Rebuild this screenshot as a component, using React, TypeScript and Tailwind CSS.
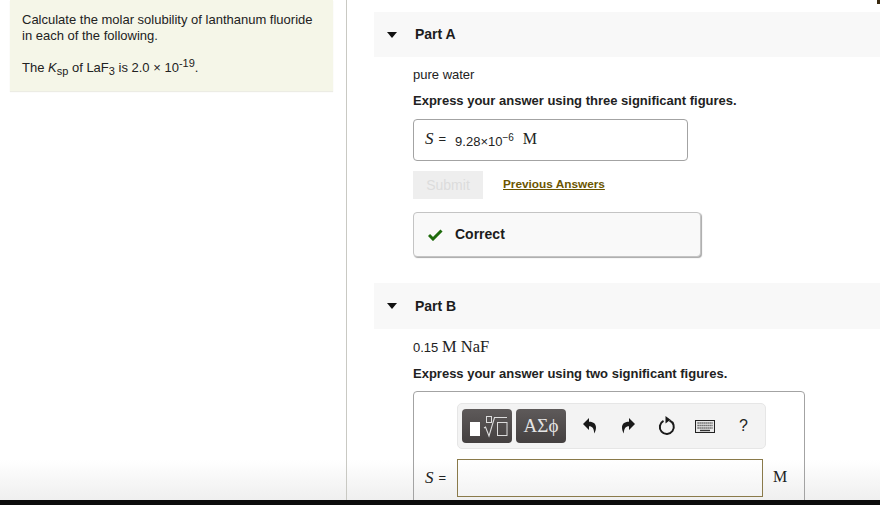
const sans = "font-['Liberation_Sans',Arial,sans-serif]";
const serif = "font-['Liberation_Serif','Times_New_Roman',serif]";

function PartHeader({ label, tall }: { label: string; tall?: boolean }) {
  return (
    <div className={`flex items-center bg-[#f8f8f8] ${tall ? "h-[46px]" : "h-[45px]"}`}>
      {/* Caret */}
      <svg width="10" height="6" viewBox="0 0 10 6" className="ml-[13px]">
        <path d="M0 0h10L5 6z" fill="#111" />
      </svg>
      <span className="ml-[18px] text-[14px] font-bold text-[#1c1c1c]">{label}</span>
    </div>
  );
}

function SquareRootIcon() {
  return (
    <svg width="50" height="34" viewBox="0 0 50 34" fill="none">
      <rect x="8" y="13" width="10" height="14" fill="#fff" />
      <rect x="24.5" y="7.5" width="5" height="6" stroke="#ddd" strokeWidth="1" />
      <path d="M22 19l1.500-1 3.500 9 5.500-18.500H45" stroke="#ddd" strokeWidth="1.100" />
      <rect x="35.500" y="13.500" width="9.500" height="13" stroke="#ddd" strokeWidth="1" />
    </svg>
  );
}

function UndoIcon({ flip }: { flip?: boolean }) {
  return (
    <svg width="14" height="16" viewBox="0 0 14 16" className={flip ? "-scale-x-100" : ""}>
      <path d="M6 0L0 6l6 6V8.200c3.500 0 5 2 5.200 7.300C14.500 9.500 13.500 3.800 6 3.800z" fill="#1a1a1a" />
    </svg>
  );
}

function ResetIcon() {
  return (
    <svg width="18" height="20" viewBox="0 0 18 20" fill="none">
      <path d="M5.500 4.800a7 7 0 1 0 6-.3" stroke="#1a1a1a" strokeWidth="2" />
      <path d="M7.500 0v7.500l5-3.800z" fill="#1a1a1a" />
    </svg>
  );
}

function KeyboardIcon() {
  return (
    <svg width="20" height="13" viewBox="0 0 20 13">
      <rect x="0.500" y="0.500" width="19" height="12" fill="#e8e8e8" stroke="#222" />
      <path d="M2.500 3h15M2.500 5.500h15M2.500 8h15" stroke="#444" strokeWidth="1.400" strokeDasharray="1.200 0.800" />
      <path d="M5 10.500h10" stroke="#333" strokeWidth="1.400" />
    </svg>
  );
}

export default function App() {
  return (
    <div className={`flex h-[505px] w-[880px] flex-col overflow-hidden bg-white text-[#222] ${sans}`}>
      <div className="relative flex h-[500px] overflow-hidden bg-gradient-to-b from-white from-[92%] to-[#efefef]">
        {/* Corner mark at the top right */}
        <div className="absolute right-0 top-0 h-[4px] w-[3px] bg-[#3a2a10]" />

        {/* Left column with the problem statement */}
        <aside className="w-[347px] shrink-0 border-r border-[#c9c9c3] pl-[10px] pr-[13px]">
          <div className="h-[91px] bg-[#f5f6e8] pl-[12px] pt-[12px] text-[13px] leading-[16px] text-[#222] shadow-[0_1px_1px_#ecece4]">
            <p>
              Calculate the molar solubility of lanthanum fluoride
              <br />
              in each of the following.
            </p>
            <p className="mt-[16px]">
              The <i>K</i>
              <sub className="text-[11px]">sp</sub> of LaF<sub className="text-[11px]">3</sub> is 2.0 × 10
              <sup className="text-[11px]">-19</sup>.
            </p>
          </div>
        </aside>

        {/* Right column with the parts */}
        <main className="min-w-0 flex-1 pl-[27px] pt-[12px]">
          <PartHeader label="Part A" />
          <div className="pl-[39px]">
            <p className="mt-[10px] text-[13px] leading-[16px]">pure water</p>
            <p className="mt-[10px] text-[13px] font-bold leading-[16px]">
              Express your answer using three significant figures.
            </p>
            <div className="mt-[10px] flex h-[42px] w-[275px] items-center rounded-[4px] border border-[#a3a3a3] pl-[11px]">
              <i className={`${serif} -mt-[2px] text-[17px]`}>S</i>
              <span className="ml-[5px] -mt-[2px] text-[13px]">=</span>
              <span className="ml-[9px] mt-[3px] text-[13px]">
                9.28×10<sup className="text-[10px]">−6</sup>
              </span>
              <span className={`${serif} ml-[9px] -mt-[3px] text-[16px]`}>M</span>
            </div>
            <div className="mt-[10px] flex h-[28px] items-center">
              <button className="h-[28px] w-[70px] bg-[#eeeeee] text-[14px] text-[#dcdcdc]">Submit</button>
              <a className="ml-[20px] -mt-[1px] text-[11.800px] font-bold text-[#6b5500] underline">Previous Answers</a>
            </div>
            <div className="mt-[13px] flex h-[45px] w-[288px] items-center rounded-[4px] border border-[#c4c4c4] bg-[#f9f9f9] pl-[14px] shadow-[1px_1px_1px_#a8a8a8]">
              <svg width="15" height="12" viewBox="0 0 15 12">
                <path d="M1 6l4 4 8.500-8.500" fill="none" stroke="#1e6b0c" strokeWidth="3" />
              </svg>
              <span className="ml-[12px] text-[14px] font-bold text-[#1c1c1c]">Correct</span>
            </div>
          </div>

          <div className="mt-[26px]">
            <PartHeader label="Part B" tall />
          </div>
          <div className="pl-[39px]">
            <p className="mt-[10px] text-[13px] leading-[16px]">
              0.15 <span className={`${serif} text-[16.500px]`}>M NaF</span>
            </p>
            <p className="mt-[10px] text-[13px] font-bold leading-[16px]">
              Express your answer using two significant figures.
            </p>
            <div className="mt-[9px] h-[121px] w-[392px] rounded-t-[4px] border border-[#a3a3a3] pl-[43px] pt-[11px]">
              {/* Math toolbar */}
              <div className="flex h-[46px] w-[309px] items-center rounded-[5px] border border-[#e6e6e6] bg-[#f3f3f3] pl-[4px]">
                <button className="h-[34px] w-[50px] rounded-[4px] bg-gradient-to-b from-[#5e5a5a] to-[#444040]">
                  <SquareRootIcon />
                </button>
                <button className={`${serif} ml-[4px] h-[34px] w-[50px] rounded-[4px] bg-gradient-to-b from-[#5e5a5a] to-[#444040] text-[19px] text-[#e4e4e4]`}>
                  ΑΣϕ
                </button>
                <span className="ml-[17px] flex"><UndoIcon /></span>
                <span className="ml-[24px] flex"><UndoIcon flip /></span>
                <span className="ml-[23px] flex"><ResetIcon /></span>
                <span className="ml-[19px] flex"><KeyboardIcon /></span>
                <span className="ml-[24px] text-[16px] text-[#222]">?</span>
              </div>
              <div className="mt-[10px] flex items-center">
                <span className="-ml-[32px] flex w-[32px] items-center">
                  <i className={`${serif} text-[17px]`}>S</i>
                  <span className="ml-[5px] text-[13px]">=</span>
                </span>
                <div className="h-[38px] w-[306px] border border-[#8a7a4a] bg-gradient-to-b from-white to-[#f3f3f3]" />
                <span className={`${serif} ml-[10px] -mt-[2px] text-[16px]`}>M</span>
              </div>
            </div>
          </div>
        </main>
      </div>
      <div className="h-[5px] bg-[#0c0c0c]" />
    </div>
  );
}
